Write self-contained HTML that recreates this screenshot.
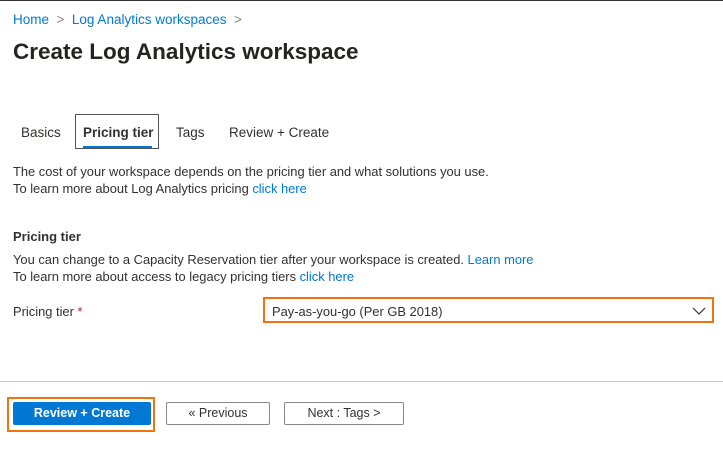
<!DOCTYPE html><html><head><style>
body{margin:0;width:723px;height:451px;background:#fff;font-family:"Liberation Sans",sans-serif;color:#323130;position:relative;overflow:hidden;border-top:1px solid #333;box-sizing:border-box}
.a{position:absolute;white-space:nowrap}
.l{color:#0078d4}
.s{font-size:12.9px}
</style></head><body>
<div class="a l" style="left:13px;top:11px;font-size:13.5px">Home <span style="color:#888">&nbsp;&gt;&nbsp;</span> Log Analytics workspaces <span style="color:#888">&nbsp;&gt;</span></div>
<div class="a" style="left:13px;top:38px;font-size:22.5px;font-weight:600;color:#252423">Create Log Analytics workspace</div>
<div class="a" style="left:75px;top:113px;width:84px;height:35px;border:1px solid #555;box-sizing:border-box"></div>
<div class="a" style="left:83px;top:145px;width:69px;height:2px;background:#0078d4"></div>
<div class="a" style="left:21px;top:124px;font-size:13.5px">Basics</div>
<div class="a" style="left:83px;top:124px;font-size:13.5px;font-weight:600">Pricing tier</div>
<div class="a" style="left:176px;top:124px;font-size:13.5px">Tags</div>
<div class="a" style="left:229px;top:124px;font-size:13.5px">Review + Create</div>
<div class="a s" style="left:13px;top:163px">The cost of your workspace depends on the pricing tier and what solutions you use.</div>
<div class="a s" style="left:13px;top:180px">To learn more about Log Analytics pricing <span class="l">click here</span></div>
<div class="a" style="left:13px;top:228px;font-size:13px;font-weight:bold">Pricing tier</div>
<div class="a s" style="left:13px;top:251px">You can change to a Capacity Reservation tier after your workspace is created. <span class="l">Learn more</span></div>
<div class="a s" style="left:13px;top:268px">To learn more about access to legacy pricing tiers <span class="l">click here</span></div>
<div class="a s" style="left:13px;top:303px">Pricing tier <span style="color:#a4262c">*</span></div>
<div class="a" style="left:263px;top:296px;width:451px;height:26px;border:2px solid #f2720c;box-sizing:border-box"></div>
<div class="a s" style="left:272px;top:303px">Pay-as-you-go (Per GB 2018)</div>
<svg class="a" style="left:692px;top:305px" width="14" height="10"><path d="M1 2L7 8L13 2" fill="none" stroke="#333" stroke-width="1.2"/></svg>
<div class="a" style="left:0;top:380px;width:723px;height:1px;background:#c8c6c4"></div>
<div class="a" style="left:7px;top:396px;width:148px;height:35px;border:2px solid #f2720c;box-sizing:border-box"></div>
<div class="a" style="left:13px;top:401px;width:138px;height:23px;background:#0078d4;border-radius:2px;color:#fff;font-size:12.5px;font-weight:600;text-align:center;line-height:23px">Review + Create</div>
<div class="a" style="left:166px;top:401px;width:104px;height:23px;border:1px solid #8a8886;box-sizing:border-box;border-radius:2px;font-size:12.5px;text-align:center;line-height:21px">« Previous</div>
<div class="a" style="left:284px;top:401px;width:120px;height:23px;border:1px solid #8a8886;box-sizing:border-box;border-radius:2px;font-size:12.5px;text-align:center;line-height:21px">Next : Tags &gt;</div>
</body></html>
